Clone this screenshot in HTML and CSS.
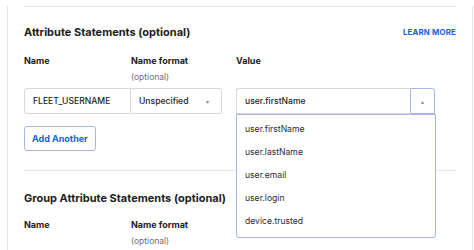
FILE: index.html
```html
<!DOCTYPE html>
<html lang="en">
<head>
  <meta charset="UTF-8" />
  <title>Attribute Statements</title>
  <link rel="stylesheet" href="styles.css">
</head>
<body>
  <div class="panel">
    <div class="rule"></div>

    <section class="secao">
      <div class="cabecalho">
        <h2 class="titulo">Attribute Statements (optional)</h2>
        <a class="saiba" href="#">LEARN MORE</a>
      </div>

      <div class="campos">
        <div class="col-nome">
          <p class="rotulo">Name</p>
        </div>
        <div class="col-formato">
          <p class="rotulo">Name format</p>
          <p class="opcional">(optional)</p>
        </div>
        <div class="col-valor">
          <p class="rotulo">Value</p>
        </div>
      </div>

      <div class="linha">
        <div class="entrada col-nome">FLEET_USERNAME</div>
        <div class="selecao col-formato">
          <span>Unspecified</span>
          <span class="seta">&#9662;</span>
        </div>
        <div class="valor col-valor">
          <div class="valor-texto">user.firstName</div>
          <div class="valor-btn"><span class="seta">&#9652;</span></div>

          <ul class="menu">
            <li>user.firstName</li>
            <li>user.lastName</li>
            <li>user.email</li>
            <li>user.login</li>
            <li>device.trusted</li>
          </ul>
        </div>
      </div>

      <button class="add-btn">Add Another</button>
    </section>

    <div class="rule rule-meio"></div>

    <section class="secao secao-grupo">
      <div class="cabecalho">
        <h2 class="titulo">Group Attribute Statements (optional)</h2>
      </div>
      <div class="campos">
        <div class="col-nome">
          <p class="rotulo">Name</p>
        </div>
        <div class="col-formato">
          <p class="rotulo">Name format</p>
          <p class="opcional">(optional)</p>
        </div>
      </div>
    </section>
  </div>
</body>
</html>
```

FILE: styles.css
```css
* {
  margin: 0;
  padding: 0;
  box-sizing: border-box;
  font-family: 'Inter', 'Liberation Sans', sans-serif;
}

body {
  background: #fff;
  color: #1d1d21;
  height: 250px;
  overflow: hidden;
}

.panel {
  margin-left: 7px;
  width: 466px;
  height: 250px;
  border-left: 1px solid #e4e4e7;
  border-right: 1px solid #e4e4e7;
  padding: 0 16px;
}

.rule {
  margin-top: 6px;
  border-top: 1px solid #e8e8eb;
}

.rule-meio {
  margin-top: 19px;
}

.secao {
  padding-top: 18px;
}

.secao-grupo {
  padding-top: 20px;
}

.secao-grupo .campos {
  margin-top: 14px;
}

.cabecalho {
  display: flex;
  justify-content: space-between;
  align-items: center;
}

.titulo {
  font-size: 11px;
  font-weight: 700;
  line-height: 14px;
}

.saiba {
  font-size: 7.8px;
  font-weight: 700;
  color: #1662dd;
  text-decoration: none;
  letter-spacing: 0.2px;
}

.campos {
  display: flex;
  margin-top: 16px;
}

.col-nome {
  width: 107px;
}

.col-formato {
  width: 91px;
}

.col-valor {
  width: 199px;
  margin-left: 14px;
}

.rotulo {
  font-size: 9px;
  font-weight: 700;
  line-height: 12px;
}

.opcional {
  font-size: 8.5px;
  color: #6e6e78;
  line-height: 12px;
  margin-top: 4px;
}

.linha {
  display: flex;
  margin-top: 5px;
  height: 26px;
}

.entrada,
.selecao,
.valor-texto {
  height: 26px;
  border: 1px solid #d8d8dc;
  font-size: 8.6px;
  font-weight: 500;
  display: flex;
  align-items: center;
  padding-left: 8px;
}

.entrada {
  border-radius: 3px 0 0 3px;
}

.selecao {
  border-left: none;
  border-radius: 0 3px 3px 0;
  justify-content: space-between;
  padding-right: 12px;
}

.seta {
  font-size: 6px;
  color: #8a8a94;
}

.valor {
  display: flex;
  position: relative;
}

.valor-texto {
  flex: 1;
  border-right: none;
  border-radius: 3px 0 0 0;
}

.valor-btn {
  width: 25px;
  height: 26px;
  border: 1px solid #a9b4e4;
  border-radius: 0 3px 0 0;
  display: flex;
  align-items: center;
  justify-content: center;
}

.menu {
  position: absolute;
  top: 26px;
  left: 0;
  width: 200px;
  list-style: none;
  background: #fff;
  border: 1px solid #a9b4e4;
  border-radius: 0 0 3px 3px;
  padding: 3px 0 4px;
}

.menu li {
  font-size: 8.6px;
  line-height: 23px;
  padding-left: 8px;
  color: #2a2a30;
}

.add-btn {
  display: block;
  margin-top: 12px;
  background: #fff;
  border: 1px solid #aab6e2;
  border-radius: 3px;
  color: #1662dd;
  font-size: 9px;
  font-weight: 700;
  padding: 0 7px;
  height: 25px;
  white-space: nowrap;
}
```
